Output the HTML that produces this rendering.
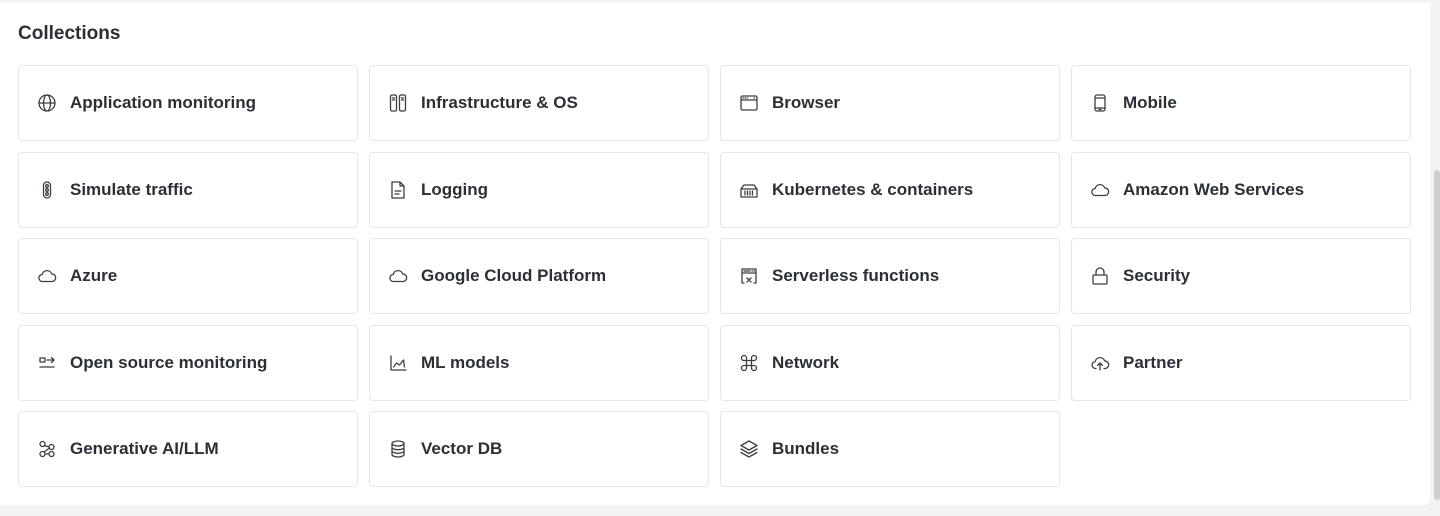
<!DOCTYPE html>
<html><head><meta charset="utf-8"><style>
*{box-sizing:border-box;margin:0;padding:0}
html,body{width:1440px;height:516px;overflow:hidden;background:#f3f3f3;font-family:"Liberation Sans",sans-serif}
.panel{position:absolute;left:0;top:3px;width:1430px;height:502px;background:#fff;border-radius:0 0 6px 0}
h2{position:absolute;left:18px;top:23px;font-size:19px;font-weight:600;color:#2a3036}
.grid{position:absolute;left:18px;top:65px;display:grid;grid-template-columns:repeat(4,340px);grid-auto-rows:76px;column-gap:11px;row-gap:10.5px}
.card{border:1px solid #e6e6e6;border-radius:4px;display:flex;align-items:center;padding-left:18px;color:#2a3036;font-size:17px;font-weight:600}
.card svg{width:20px;height:20px;margin-right:13px;fill:none;stroke:#3a3f44;stroke-width:1.3;stroke-linecap:round;stroke-linejoin:round;flex:none}
.sb{position:absolute;left:1434px;top:170px;width:6px;height:330px;background:#cfcfcf;border-radius:3px}
</style></head><body>
<div class="panel"></div>
<div class="sb"></div>
<h2>Collections</h2>
<div class="grid">
<div class="card"><svg viewBox="0 0 20 20"><circle cx="10" cy="10" r="8"/><ellipse cx="10" cy="10" rx="3.5" ry="8"/><path d="M2 10h16"/></svg>Application monitoring</div>
<div class="card"><svg viewBox="0 0 20 20"><rect x="2.5" y="2" width="6" height="16" rx="1.5"/><rect x="11.5" y="2" width="6" height="16" rx="1.5"/><path d="M4.5 5h2M4.5 7h2M13.5 5h2M13.5 7h2"/></svg>Infrastructure &amp; OS</div>
<div class="card"><svg viewBox="0 0 20 20"><rect x="2" y="3" width="16" height="14" rx="1.5"/><path d="M2 7h16M4 5h.5M6 5h.5M8 5h.5M15 5h.5"/></svg>Browser</div>
<div class="card"><svg viewBox="0 0 20 20"><rect x="5" y="2" width="10" height="16" rx="2"/><path d="M5 5h10M5 15h10M9 16.5h2"/></svg>Mobile</div>
<div class="card"><svg viewBox="0 0 20 20"><rect x="6.5" y="2" width="7" height="16" rx="3.5"/><circle cx="10" cy="6" r="1.3"/><circle cx="10" cy="10" r="1.3"/><circle cx="10" cy="14" r="1.3"/></svg>Simulate traffic</div>
<div class="card"><svg viewBox="0 0 20 20"><path d="M4 2h8l4 4v12H4z M12 2v4h4M7 11h6M7 14h4"/></svg>Logging</div>
<div class="card"><svg viewBox="0 0 20 20"><path d="M2 17V9l3-4h10l3 4v8z M2 9h16M6 11v4M8.5 11v4M11 11v4M13.5 11v4"/></svg>Kubernetes &amp; containers</div>
<div class="card"><svg viewBox="0 0 20 20"><path d="M5.5 15.5a3.5 3.5 0 0 1-.3-7A5 5 0 0 1 14.8 8a3.7 3.7 0 0 1 .2 7.5z"/></svg>Amazon Web Services</div>
<div class="card"><svg viewBox="0 0 20 20"><path d="M5.5 15.5a3.5 3.5 0 0 1-.3-7A5 5 0 0 1 14.8 8a3.7 3.7 0 0 1 .2 7.5z"/></svg>Azure</div>
<div class="card"><svg viewBox="0 0 20 20"><path d="M5.5 15.5a3.5 3.5 0 0 1-.3-7A5 5 0 0 1 14.8 8a3.7 3.7 0 0 1 .2 7.5z"/></svg>Google Cloud Platform</div>
<div class="card"><svg viewBox="0 0 20 20"><path d="M5 17H3V3h14v14h-2M3 7h14M5 5h6M13 5h.5M15 5h.5M8 12l4 4M12 12l-4 4"/></svg>Serverless functions</div>
<div class="card"><svg viewBox="0 0 20 20"><rect x="3" y="9" width="14" height="9" rx="1"/><path d="M6 9V6a4 4 0 0 1 8 0v3"/></svg>Security</div>
<div class="card"><svg viewBox="0 0 20 20"><rect x="3" y="5" width="5" height="4"/><path d="M10 7h7M14.5 4.5L17 7l-2.5 2.5M3 14h14"/></svg>Open source monitoring</div>
<div class="card"><svg viewBox="0 0 20 20"><path d="M3 3v14h15M5.5 14l3-4 3 2 4-5 1 7"/></svg>ML models</div>
<div class="card"><svg viewBox="0 0 20 20"><path d="M7.5 7.5h5v5h-5zM7.5 7.5V5A2.5 2.5 0 1 0 5 7.5h2.5M12.5 7.5V5A2.5 2.5 0 1 1 15 7.5h-2.5M7.5 12.5V15A2.5 2.5 0 1 1 5 12.5h2.5M12.5 12.5V15a2.5 2.5 0 1 0 2.5-2.5h-2.5"/></svg>Network</div>
<div class="card"><svg viewBox="0 0 20 20"><path d="M6 15.5a3.5 3.5 0 0 1-.8-7A5 5 0 0 1 14.8 8a3.7 3.7 0 0 1 .2 7.5h-1M10 17v-7M7.5 12.5L10 10l2.5 2.5"/></svg>Partner</div>
<div class="card"><svg viewBox="0 0 20 20"><circle cx="5.5" cy="5" r="2.5"/><circle cx="14.5" cy="8" r="2.5"/><circle cx="5.5" cy="15" r="2.5"/><circle cx="14.5" cy="15" r="2.5"/><path d="M7.5 6.5l4.5 1.5M7 13l5.5-4M8 15h4"/></svg>Generative AI/LLM</div>
<div class="card"><svg viewBox="0 0 20 20"><ellipse cx="10" cy="4.5" rx="6" ry="2.5"/><path d="M4 4.5v11c0 1.4 2.7 2.5 6 2.5s6-1.1 6-2.5v-11M4 8.2c0 1.4 2.7 2.5 6 2.5s6-1.1 6-2.5M4 11.8c0 1.4 2.7 2.5 6 2.5s6-1.1 6-2.5"/></svg>Vector DB</div>
<div class="card"><svg viewBox="0 0 20 20"><path d="M10 2l8 4.5-8 4.5-8-4.5z M2 10l8 4.5 8-4.5M2 13.5L10 18l8-4.5"/></svg>Bundles</div>
</div>
</body></html>
